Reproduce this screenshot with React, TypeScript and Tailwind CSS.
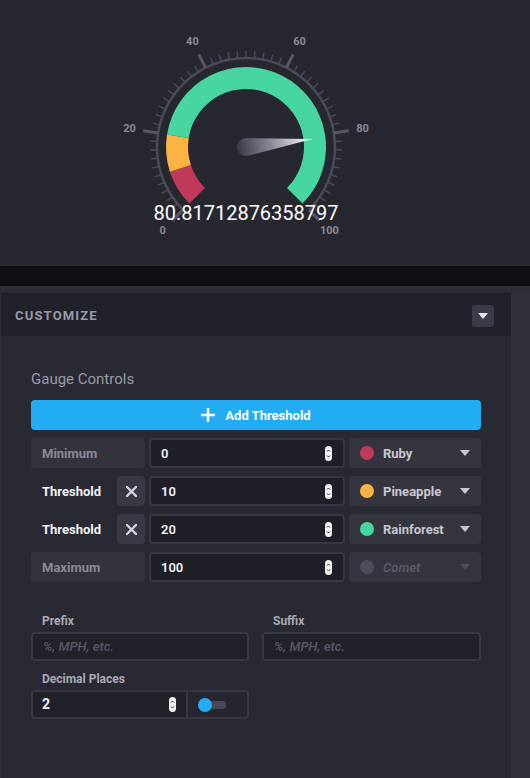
import React from "react";

const CX = 246;
const CY = 147;
const VALUE = 80.81712876358797;

function pt(r: number, a: number): [number, number] {
  const rad = (a * Math.PI) / 180;
  return [CX + r * Math.sin(rad), CY - r * Math.cos(rad)];
}
function ang(v: number) {
  return -135 + 2.7 * v;
}
function band(a0: number, a1: number, r0: number, r1: number) {
  const [x0, y0] = pt(r1, a0);
  const [x1, y1] = pt(r1, a1);
  const [x2, y2] = pt(r0, a1);
  const [x3, y3] = pt(r0, a0);
  const large = a1 - a0 > 180 ? 1 : 0;
  return `M${x0} ${y0} A${r1} ${r1} 0 ${large} 1 ${x1} ${y1} L${x2} ${y2} A${r0} ${r0} 0 ${large} 0 ${x3} ${y3} Z`;
}

function Gauge() {
  const ticks = [];
  for (let v = 0; v <= 100; v += 2) {
    const major = v % 20 === 0;
    const a = ang(v);
    const [x1, y1] = pt(89, a);
    const [x2, y2] = pt(major ? 104 : 96, a);
    ticks.push(
      <line
        key={v}
        x1={x1}
        y1={y1}
        x2={x2}
        y2={y2}
        stroke={major ? "#575768" : "#4a4a5a"}
        strokeWidth={major ? 3 : 1.5}
      />
    );
  }
  const labels = [0, 20, 40, 60, 80, 100].map((v) => {
    const [x, y] = pt(118, ang(v));
    return (
      <text
        key={v}
        x={x}
        y={y}
        textAnchor="middle"
        dominantBaseline="central"
        fontSize="11"
        fontWeight="700"
        fill="#8a8a98"
        fontFamily="Roboto, sans-serif"
      >
        {v}
      </text>
    );
  });
  const [ax, ay] = pt(89, -135);
  const [bx, by] = pt(89, 135);
  const a = ang(VALUE);
  const rad = (a * Math.PI) / 180;
  const ux = Math.sin(rad);
  const uy = -Math.cos(rad);
  const nx = -uy;
  const ny = ux;
  const tip = [CX + 67 * ux, CY + 67 * uy];
  const p1 = [CX + 9 * nx, CY + 9 * ny];
  const p2 = [CX - 9 * nx, CY - 9 * ny];
  return (
    <svg width="530" height="266" viewBox="0 0 530 266" className="block">
      <defs>
        <linearGradient id="ng" gradientUnits="userSpaceOnUse" x1={CX - 9} y1={CY} x2={tip[0]} y2={tip[1]}>
          <stop offset="0" stopColor="#3a3a46" />
          <stop offset="0.45" stopColor="#8a8a96" />
          <stop offset="1" stopColor="#ffffff" />
        </linearGradient>
      </defs>
      <path d={`M${ax} ${ay} A89 89 0 1 1 ${bx} ${by}`} fill="none" stroke="#4a4a5a" strokeWidth="2.5" />
      {ticks}
      <path d={band(ang(0), ang(10), 58, 80)} fill="#c23a5b" />
      <path d={band(ang(10), ang(20), 58, 80)} fill="#fdb342" />
      <path d={band(ang(20), ang(100), 58, 80)} fill="#48d6a0" />
      {labels}
      <circle cx={CX} cy={CY} r="9" fill="url(#ng)" />
      <path d={`M${p1[0]} ${p1[1]} L${tip[0]} ${tip[1]} L${p2[0]} ${p2[1]} Z`} fill="url(#ng)" />
      <text
        x={CX}
        y={213}
        textAnchor="middle"
        dominantBaseline="central"
        fontSize="20"
        fill="#ffffff"
        fontFamily="Roboto, sans-serif"
      >
        {String(VALUE)}
      </text>
    </svg>
  );
}

function Spinner() {
  return (
    <svg width="7" height="15" viewBox="0 0 7 15" className="shrink-0">
      <rect x="0" y="0" width="7" height="15" rx="3.5" fill="#f2f2f4" />
      <path d="M2 5.5 L3.5 4 L5 5.5" fill="none" stroke="#333340" strokeWidth="1" />
      <path d="M2 9.5 L3.5 11 L5 9.5" fill="none" stroke="#333340" strokeWidth="1" />
    </svg>
  );
}

function Caret({ color }: { color: string }) {
  return (
    <svg width="10" height="6" viewBox="0 0 10 6">
      <path d="M0 0 L10 0 L5 6 Z" fill={color} />
    </svg>
  );
}

function NumInput({ value }: { value: string }) {
  return (
    <div className="w-[196px] h-[30px] rounded-[4px] border-2 border-[#383845] bg-[#1f1f28] flex items-center justify-between pl-[10px] pr-[11px]">
      <span className="text-[13px] font-semibold text-[#f2f2f6] pt-[1px]">{value}</span>
      <Spinner />
    </div>
  );
}

function ColorSelect({ color, name, disabled }: { color: string; name: string; disabled?: boolean }) {
  return (
    <div className="w-[132px] h-[30px] rounded-[4px] bg-[#35353f] flex items-center pl-[11px] pr-[11px]">
      <span className="w-[14px] h-[14px] rounded-full shrink-0" style={{ backgroundColor: color }} />
      <span
        className={
          disabled
            ? "ml-[9px] flex-1 text-[13px] font-semibold italic text-[#5a5a68] pt-[1px]"
            : "ml-[9px] flex-1 text-[13px] font-bold text-[#c8c8d2] pt-[1px]"
        }
      >
        {name}
      </span>
      <Caret color={disabled ? "#4e4e5c" : "#c8c8d2"} />
    </div>
  );
}

function BoxLabel({ text }: { text: string }) {
  return (
    <div className="w-[114px] h-[30px] rounded-[4px] bg-[#33333e] flex items-center pl-[11px] pt-[1px] text-[13px] font-bold text-[#8a8a96]">
      {text}
    </div>
  );
}

function ThresholdLabel() {
  return (
    <div className="w-[114px] h-[30px] flex items-center justify-between">
      <span className="pl-[11px] pt-[1px] text-[13px] font-bold text-[#f2f2f6]">Threshold</span>
      <div className="w-[28px] h-[30px] rounded-[4px] bg-[#393946] flex items-center justify-center">
        <svg width="11" height="11" viewBox="0 0 11 11">
          <path d="M1 1 L10 10 M10 1 L1 10" stroke="#d4d4dc" strokeWidth="2.4" strokeLinecap="round" />
        </svg>
      </div>
    </div>
  );
}

function Row({ label, value, color, name, disabled }: { label: React.ReactNode; value: string; color: string; name: string; disabled?: boolean }) {
  return (
    <div className="flex gap-[4px] mt-[8px]">
      {label}
      <NumInput value={value} />
      <ColorSelect color={color} name={name} disabled={disabled} />
    </div>
  );
}

export default function App() {
  return (
    <div className="min-h-screen flex flex-col bg-[#292933] font-['Roboto',sans-serif]">
      <div className="h-[266px] bg-[#272730]">
        <Gauge />
      </div>
      <div className="h-[20px] bg-[#0f0f14]" />
      <div className="h-[6px] bg-[#2d2d38]" />
      <div className="flex flex-1">
        <div className="flex-1 flex flex-col border-l border-[#2e2e39]">
          <div className="h-[44px] bg-[#21212b] border-t border-[#2a2a35] flex items-center justify-between pl-[14px] pr-[17px] pt-[2px]">
            <span className="text-[13px] font-bold tracking-[0.09em] text-[#9a9aa8] pt-[1px]">CUSTOMIZE</span>
            <div className="w-[22px] h-[22px] rounded-[3px] bg-[#3b3b4a] flex items-center justify-center">
              <Caret color="#e6e6ee" />
            </div>
          </div>
          <div className="flex-1 bg-[#292933] pt-[33px] pl-[30px] pr-[30px]">
            <div className="text-[15px] leading-[20px] text-[#9a9aa8]">Gauge Controls</div>
            <div className="mt-[11px] h-[30px] w-[450px] rounded-[4px] bg-[#22acf4] flex items-center justify-center gap-[10px]">
              <svg width="14" height="14" viewBox="0 0 14 14">
                <path d="M7 0 V14 M0 7 H14" stroke="#ffffff" strokeWidth="2.6" />
              </svg>
              <span className="text-[13px] font-bold text-white pt-[1px]">Add Threshold</span>
            </div>
            <Row label={<BoxLabel text="Minimum" />} value="0" color="#c23a5b" name="Ruby" />
            <Row label={<ThresholdLabel />} value="10" color="#fdb342" name="Pineapple" />
            <Row label={<ThresholdLabel />} value="20" color="#48d6a0" name="Rainforest" />
            <Row label={<BoxLabel text="Maximum" />} value="100" color="#4c4c5c" name="Comet" disabled />

            <div className="mt-[31px] flex gap-[13px]">
              <div className="w-[218px]">
                <div className="pl-[11px] text-[12px] leading-[16px] font-bold text-[#a9a9b6]">Prefix</div>
                <div className="mt-[3px] h-[29px] rounded-[4px] border-2 border-[#383845] bg-[#21212a] flex items-center pl-[10px] text-[13px] font-semibold italic text-[#555563]">
                  %, MPH, etc.
                </div>
              </div>
              <div className="w-[219px]">
                <div className="pl-[11px] text-[12px] leading-[16px] font-bold text-[#a9a9b6]">Suffix</div>
                <div className="mt-[3px] h-[29px] rounded-[4px] border-2 border-[#383845] bg-[#21212a] flex items-center pl-[10px] text-[13px] font-semibold italic text-[#555563]">
                  %, MPH, etc.
                </div>
              </div>
            </div>
            <div className="mt-[10px] w-[218px]">
              <div className="pl-[11px] text-[12px] leading-[16px] font-bold text-[#a9a9b6]">Decimal Places</div>
              <div className="mt-[3px] h-[29px] rounded-[4px] border-2 border-[#383845] bg-[#21212a] flex">
                <div className="w-[155px] flex items-center justify-between pl-[9px] pr-[10px] border-r-2 border-[#383845]">
                  <span className="text-[14px] font-bold text-[#f2f2f6]">2</span>
                  <Spinner />
                </div>
                <div className="flex-1 bg-[#262630] flex items-center pl-[10px]">
                  <div className="relative w-[28px] h-[14px] flex items-center">
                    <div className="absolute left-[4px] w-[24px] h-[8px] rounded-full bg-[#474756]" />
                    <div className="absolute left-0 w-[14px] h-[14px] rounded-full bg-[#22acf4]" />
                  </div>
                </div>
              </div>
            </div>
          </div>
        </div>
        <div className="w-[19px] bg-[#30303b]" />
      </div>
    </div>
  );
}
